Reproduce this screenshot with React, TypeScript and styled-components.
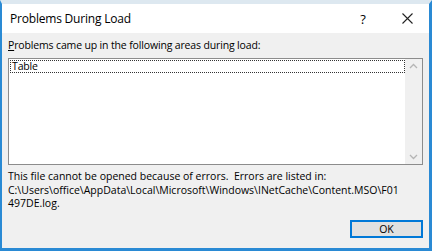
import React from "react";
import styled, { createGlobalStyle } from "styled-components";

const Global = createGlobalStyle`
  html, body { margin: 0; padding: 0; background: #ffffff; }
  body { font-family: "Open Sans", "Noto Sans", "DejaVu Sans", sans-serif; }
  * { box-sizing: border-box; }
`;

const Window = styled.div`
  width: 432px;
  height: 251px;
  display: flex;
  flex-direction: column;
  background: #f0f0f0;
  border-left: 2px solid #2a8ad4;
  border-right: 3px solid #2a8ad4;
  border-bottom: 3px solid #2a8ad4;
  border-top: 4px solid #dde8f0;
  color: #000;
`;

const TitleBar = styled.div`
  height: 29px;
  flex: none;
  background: #ffffff;
  display: flex;
  align-items: center;
  padding-left: 8px;
`;

const Title = styled.div`
  flex: 1;
  font-size: 12px;
  letter-spacing: -0.2px;
`;

const TitleButton = styled.div<{ $w: number }>`
  width: ${(p) => p.$w}px;
  height: 29px;
  display: flex;
  align-items: center;
  justify-content: center;
  font-size: 13px;
`;

const Body = styled.div`
  flex: 1;
  display: flex;
  flex-direction: column;
  padding: 5px 6px 10px 6px;
  font-size: 10.5px;
`;

const Label = styled.div`
  line-height: 14px;
  height: 14px;
  letter-spacing: -0.15px;
  margin-bottom: 6px;
  u { text-decoration: underline; text-underline-offset: 1px; }
`;

const ListBox = styled.div`
  height: 107px;
  flex: none;
  display: flex;
  border: 1px solid #8c8c8c;
  background: #ffffff;
`;

const Items = styled.div`
  flex: 1;
  padding: 1px 0 0 1px;
`;

const Item = styled.div<{ $focused?: boolean }>`
  height: 13px;
  line-height: 11px;
  padding-left: 1px;
  border: 1px dotted ${(p) => (p.$focused ? "#333" : "transparent")};
  letter-spacing: -0.15px;
`;

const Scrollbar = styled.div`
  width: 17px;
  flex: none;
  background: #f0f0f0;
  display: flex;
  flex-direction: column;
  justify-content: space-between;
  align-items: center;
  padding: 4px 0;
`;

const Message = styled.div`
  margin-top: 5px;
  line-height: 13.5px;
  letter-spacing: 0;
  word-break: break-all;
`;

const Footer = styled.div`
  flex: 1;
  display: flex;
  justify-content: flex-end;
  align-items: flex-end;
`;

const Button = styled.button`
  width: 73px;
  height: 18px;
  border: 2px solid #0078d7;
  background: #e1e1e1;
  font-family: inherit;
  font-size: 10.5px;
  padding: 0;
  color: #000;
`;

const Chevron = ({ up }: { up?: boolean }) => (
  <svg width="9" height="6" viewBox="0 0 9 6">
    <path
      d={up ? "M1 5 L4.5 1.5 L8 5" : "M1 1 L4.5 4.5 L8 1"}
      fill="none"
      stroke="#b5b5b5"
      strokeWidth="1.3"
    />
  </svg>
);

export default function App() {
  return (
    <>
      <Global />
      <Window>
        <TitleBar>
          <Title>Problems During Load</Title>
          <TitleButton $w={44}>?</TitleButton>
          <TitleButton $w={44}>
            <svg width="11" height="11" viewBox="0 0 11 11">
              <path d="M0.5 0.5 L10.5 10.5 M10.5 0.5 L0.5 10.5" stroke="#222" strokeWidth="1.1" />
            </svg>
          </TitleButton>
        </TitleBar>
        <Body>
          <Label>
            <u>P</u>roblems came up in the following areas during load:
          </Label>
          <ListBox>
            <Items>
              <Item $focused>Table</Item>
            </Items>
            <Scrollbar>
              <Chevron up />
              <Chevron />
            </Scrollbar>
          </ListBox>
          <Message>
            This file cannot be opened because of errors.&nbsp; Errors are listed in:
            <br />
            C:\Users\office\AppData\Local\Microsoft\Windows\INetCache\Content.MSO\F01
            <br />
            497DE.log.
          </Message>
          <Footer>
            <Button>OK</Button>
          </Footer>
        </Body>
      </Window>
    </>
  );
}
